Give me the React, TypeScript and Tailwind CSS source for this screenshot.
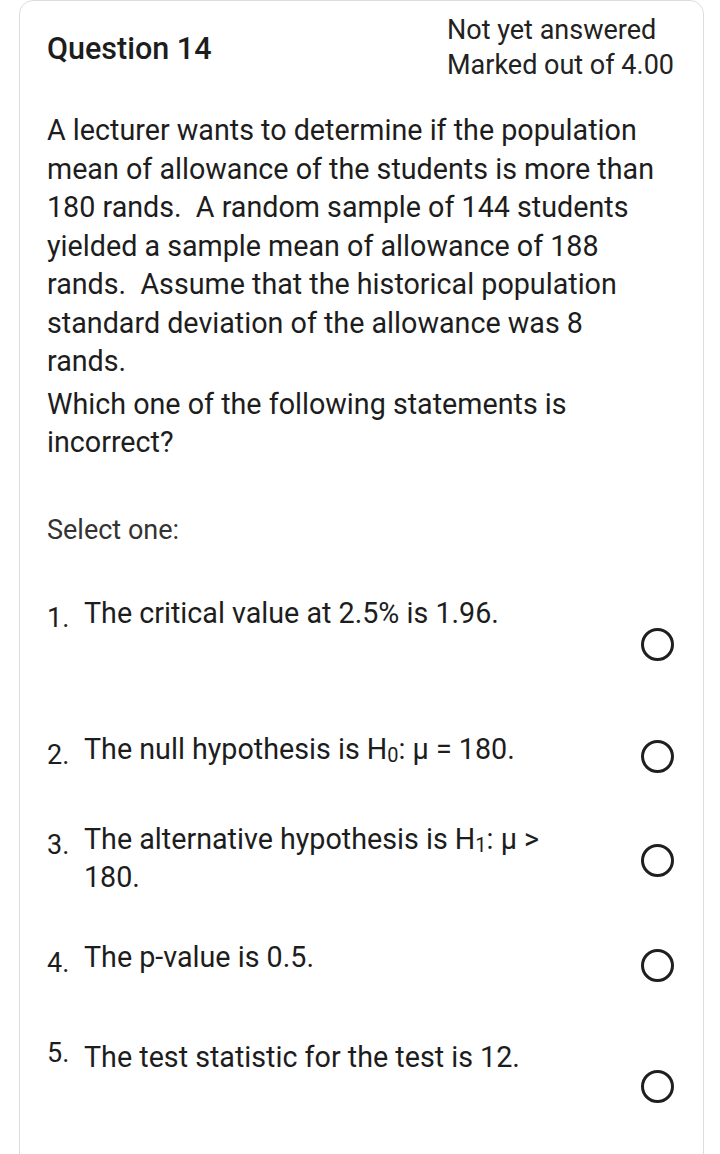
import React from "react";

function Radio() {
  return (
    <div className="w-[33px] h-[33px] rounded-full border-[3px] border-[#1f1f1f] bg-white shrink-0" />
  );
}

type Opt = {
  n: string;
  content: React.ReactNode;
  rowCls: string;
  numCls: string;
};

const subCls = "text-[20px] relative top-[3px] align-baseline";

const opts: Opt[] = [
  {
    n: "1.",
    content: <>The critical value at 2.5% is 1.96.</>,
    rowCls: "mt-[46px] h-[102px]",
    numCls: "mt-[5px]",
  },
  {
    n: "2.",
    content: (
      <>
        The null hypothesis is H<sub className={subCls}>0</sub>: μ = 180.
      </>
    ),
    rowCls: "mt-[34px] h-[54px]",
    numCls: "mt-[6px]",
  },
  {
    n: "3.",
    content: (
      <>
        The alternative hypothesis is H<sub className={subCls}>1</sub>: μ &gt;
        <br />
        180.
      </>
    ),
    rowCls: "mt-[36px] h-[82px]",
    numCls: "mt-[6px]",
  },
  {
    n: "4.",
    content: <>The p-value is 0.5.</>,
    rowCls: "mt-[36px] h-[56px]",
    numCls: "mt-[6px]",
  },
  {
    n: "5.",
    content: <>The test statistic for the test is 12.</>,
    rowCls: "mt-[44px] h-[98px]",
    numCls: "-mt-[4px]",
  },
];

export default function App() {
  return (
    <div
      className="w-[720px] h-[1154px] overflow-hidden bg-white pl-[19px] pr-[16px] text-[#1d1d1d]"
      style={{ fontFamily: "Roboto, 'Noto Sans', sans-serif" }}
    >
      <div className="h-[1200px] border border-[#dcdcdc] rounded-t-[14px] pl-[27px] pr-[29px]">
        <div className="flex justify-between items-start pt-[12px]">
          <div className="mt-[18px] text-[30.5px] leading-[35px] font-medium">Question 14</div>
          <div className="text-[27px] leading-[35px] text-[#222]">
            <div>Not yet answered</div>
            <div>Marked out of 4.00</div>
          </div>
        </div>

        <div className="mt-[28px] text-[28.7px] leading-[38.5px] whitespace-nowrap">
          <p>
            A lecturer wants to determine if the population
            <br />
            mean of allowance of the students is more than
            <br />
            180 rands.&nbsp; A random sample of 144 students
            <br />
            yielded a sample mean of allowance of 188
            <br />
            rands.&nbsp; Assume that the historical population
            <br />
            standard deviation of the allowance was 8
            <br />
            rands.
          </p>
          <p className="mt-[4px]">
            Which one of the following statements is
            <br />
            incorrect?
          </p>
        </div>

        <div className="mt-[51px] text-[27px] leading-[35px] text-[#333]">Select one:</div>

        <div className="text-[28.7px] leading-[38px]">
          {opts.map((o) => (
            <div key={o.n} className={`flex items-center ${o.rowCls}`}>
              <div className="flex self-start flex-1">
                <div className={`w-[37px] shrink-0 text-[27px] ${o.numCls}`}>{o.n}</div>
                <div className="flex-1 pr-[20px]">{o.content}</div>
              </div>
              <Radio />
            </div>
          ))}
        </div>
      </div>
    </div>
  );
}
